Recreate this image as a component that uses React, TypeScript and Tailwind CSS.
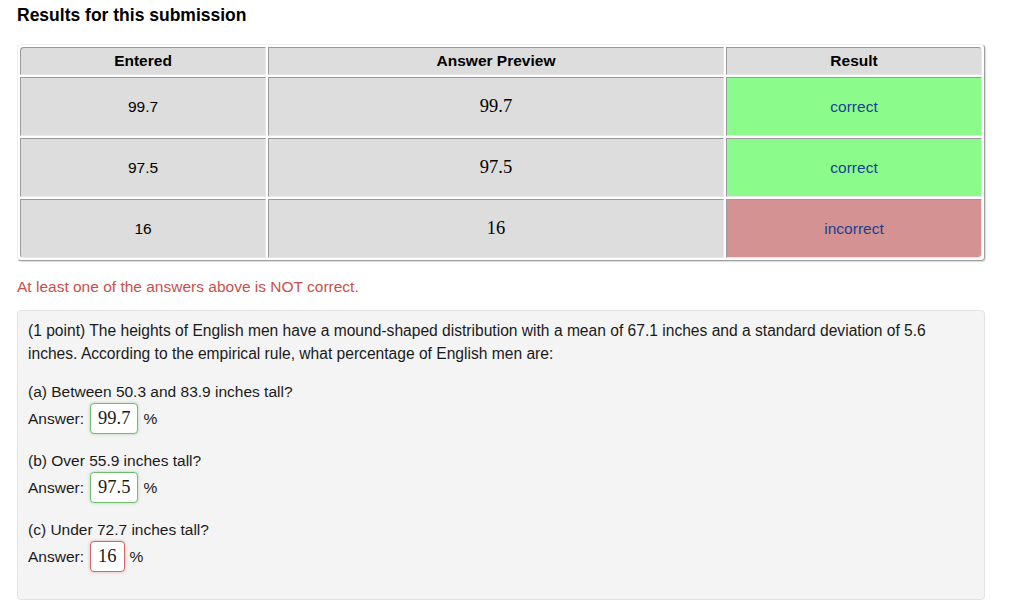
import React from "react";

const rows = [
  { entered: "99.7", preview: "99.7", ok: true },
  { entered: "97.5", preview: "97.5", ok: true },
  { entered: "16", preview: "16", ok: false },
];

const parts = [
  { q: "(a) Between 50.3 and 83.9 inches tall?", a: "99.7", ok: true },
  { q: "(b) Over 55.9 inches tall?", a: "97.5", ok: true },
  { q: "(c) Under 72.7 inches tall?", a: "16", ok: false },
];

const cell =
  "border border-t-[#9a9a9a] border-l-[#9a9a9a] border-r-[#e8e8e8] border-b-[#e8e8e8] text-center";

const serif = "[font-family:'Liberation_Serif','Times_New_Roman',serif]";

export default function App() {
  return (
    <div className="min-h-[604px] bg-white px-[17px] pt-[5px] text-[15.5px] text-black [font-family:'Liberation_Sans',Arial,sans-serif]">
      <h2 className="text-[17.5px] font-bold leading-[20px]">Results for this submission</h2>

      {/* Results table */}
      <table className="mt-[19px] w-[968px] border-separate border-spacing-[2px] rounded-[4px] border border-t-[#f0f0f0] border-l-[#f0f0f0] border-r-[#a0a0a0] border-b-[#a0a0a0] shadow-[1px_1px_1px_rgba(0,0,0,0.15)]">
        <thead>
          <tr className="h-[28px] bg-[#dddddd]">
            <th className={`${cell} w-[246px] rounded-tl-[4px] font-bold`}>Entered</th>
            <th className={`${cell} w-[456px] font-bold`}>Answer Preview</th>
            <th className={`${cell} rounded-tr-[4px] font-bold`}>Result</th>
          </tr>
        </thead>
        <tbody>
          {rows.map((r, i) => (
            <tr key={i} className="h-[59px]">
              <td className={`${cell} bg-[#dddddd] ${i === rows.length - 1 ? "rounded-bl-[4px]" : ""}`}>
                {r.entered}
              </td>
              <td className={`${cell} bg-[#dddddd] text-[18.5px] ${serif}`}>{r.preview}</td>
              <td
                className={`${cell} text-[#1c3f94] ${r.ok ? "bg-[#8bfc8b]" : "bg-[#d49292]"} ${
                  i === rows.length - 1 ? "rounded-br-[4px]" : ""
                }`}
              >
                {r.ok ? "correct" : "incorrect"}
              </td>
            </tr>
          ))}
        </tbody>
      </table>

      <p className="mt-[16px] leading-[20px] text-[#c9504c]">
        At least one of the answers above is NOT correct.
      </p>

      {/* Problem */}
      <div className="mt-[13px] h-[290px] w-[968px] rounded-[4px] border border-[#e3e3e3] bg-[#f4f4f4] px-[10px] pt-[8px] leading-[23px] text-[#1a1a1a]">
        <p className="max-w-[920px] text-[15.6px]">
          (1 point) The heights of English men have a mound-shaped distribution with a mean of 67.1 inches and a
          standard deviation of 5.6 inches. According to the empirical rule, what percentage of English men are:
        </p>
        {parts.map((p, i) => (
          <div key={i} className="mt-[15px]">
            <p>{p.q}</p>
            <div className="flex items-center">
              <span>Answer:</span>
              <span
                className={`ml-[6px] flex h-[31px] items-center rounded-[4px] border bg-white px-[7px] text-[18.5px] ${serif} ${
                  p.ok
                    ? "border-[#6fbf6f] shadow-[0_0_3px_rgba(92,184,92,0.5)]"
                    : "border-[#d06a6a] shadow-[0_0_3px_rgba(217,83,79,0.5)]"
                }`}
              >
                {p.a}
              </span>
              <span className="ml-[5px]">%</span>
            </div>
          </div>
        ))}
      </div>
    </div>
  );
}
